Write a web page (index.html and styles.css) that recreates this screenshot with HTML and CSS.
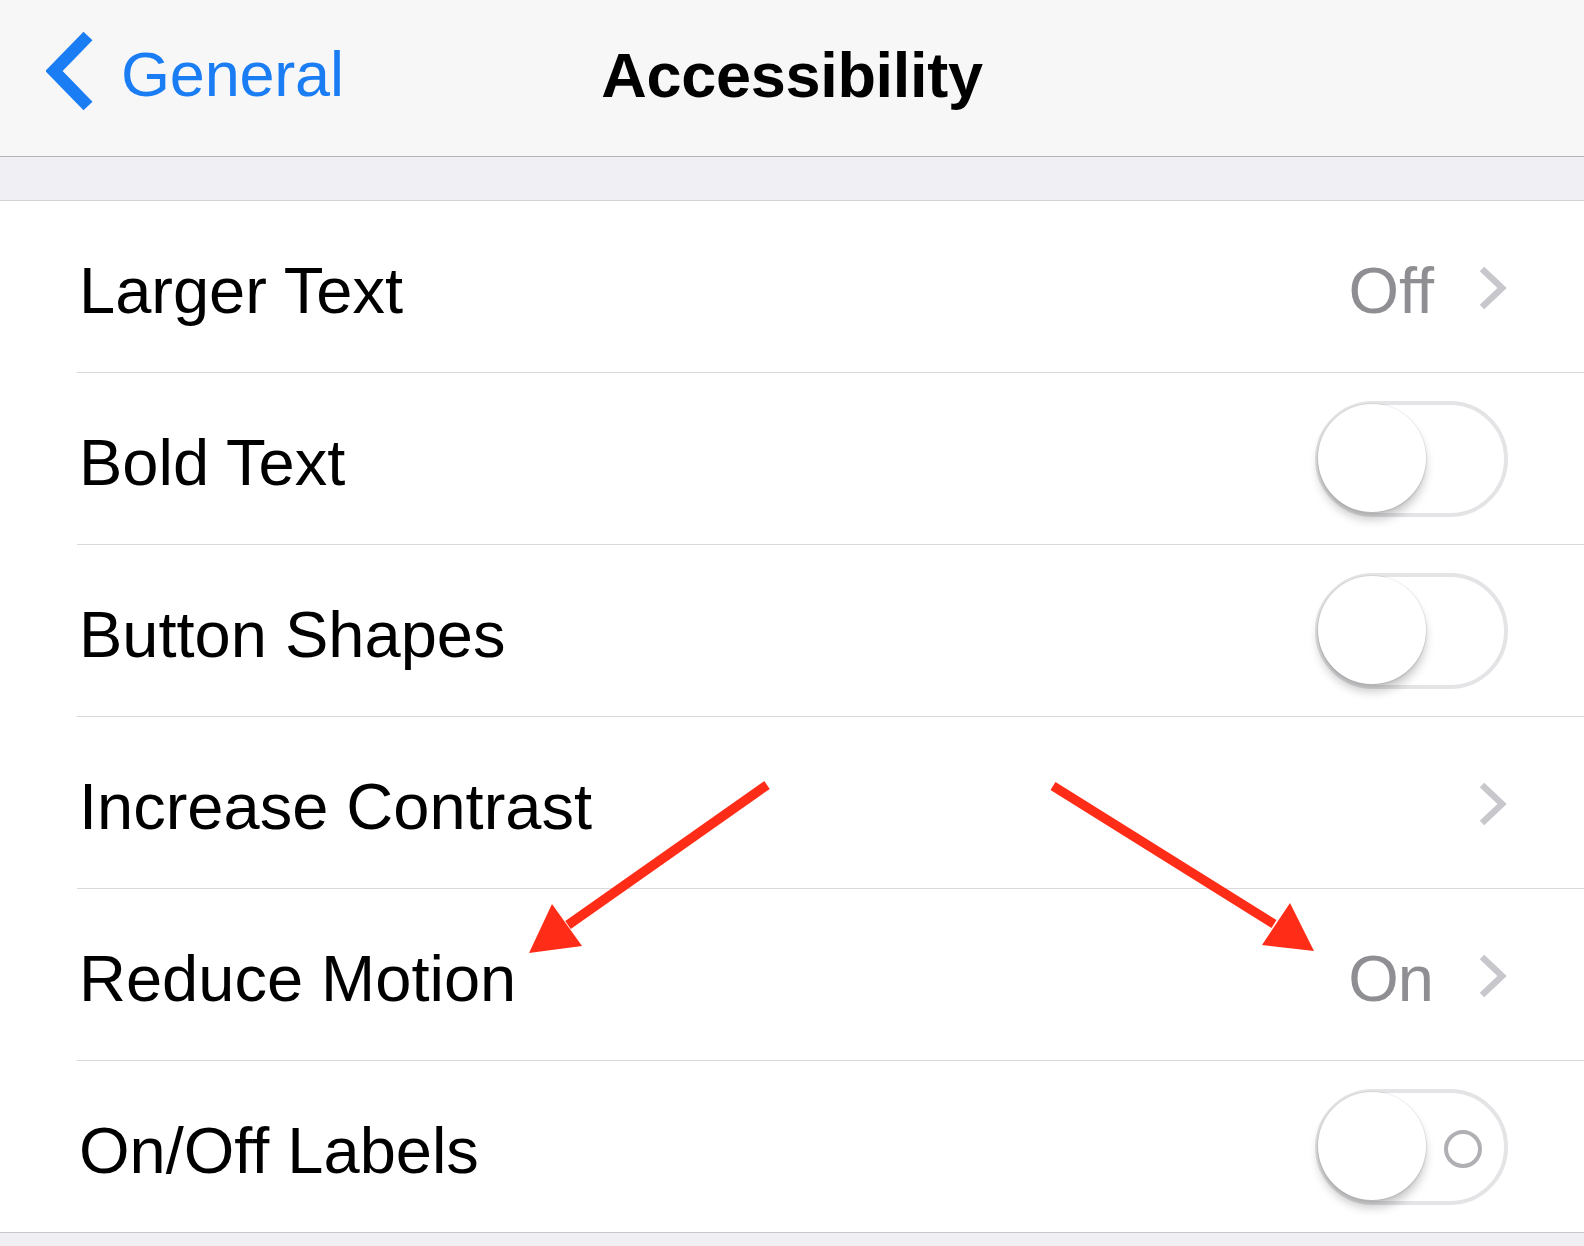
FILE: index.html
```html
<!DOCTYPE html>
<html lang="en">
<head>
<meta charset="utf-8">
<title>Accessibility</title>
<link rel="stylesheet" href="styles.css">
</head>
<body>
<div class="page">
  <header class="nav">
    <div class="nav-left">
      <svg class="back-chevron" viewBox="0 0 50 80" width="50" height="80" aria-hidden="true">
        <path d="M42 5 L8 40 L42 75" fill="none" stroke="#1a7df4" stroke-width="12.5" stroke-linejoin="miter" stroke-linecap="butt"/>
      </svg>
      <span class="back-label">General</span>
    </div>
    <h1 class="nav-title">Accessibility</h1>
    <div class="nav-right"></div>
  </header>

  <div class="gap"></div>

  <section class="group">
    <div class="row">
      <div class="row-inner">
        <span class="label">Larger Text</span>
        <span class="value">Off</span>
        <svg class="chev" viewBox="0 0 29 46" width="29" height="46" aria-hidden="true"><path d="M4 4 L24 23 L4 42" fill="none" stroke="#c7c7cc" stroke-width="6.5"/></svg>
      </div>
    </div>
    <div class="row">
      <div class="row-inner">
        <span class="label">Bold Text</span>
        <span class="switch"><span class="knob"></span></span>
      </div>
    </div>
    <div class="row">
      <div class="row-inner">
        <span class="label">Button Shapes</span>
        <span class="switch"><span class="knob"></span></span>
      </div>
    </div>
    <div class="row">
      <div class="row-inner">
        <span class="label">Increase Contrast</span>
        <svg class="chev" viewBox="0 0 29 46" width="29" height="46" aria-hidden="true"><path d="M4 4 L24 23 L4 42" fill="none" stroke="#c7c7cc" stroke-width="6.5"/></svg>
      </div>
    </div>
    <div class="row">
      <div class="row-inner">
        <span class="label">Reduce Motion</span>
        <span class="value value-on">On</span>
        <svg class="chev" viewBox="0 0 29 46" width="29" height="46" aria-hidden="true"><path d="M4 4 L24 23 L4 42" fill="none" stroke="#c7c7cc" stroke-width="6.5"/></svg>
      </div>
    </div>
    <div class="row last">
      <div class="row-inner">
        <span class="label">On/Off Labels</span>
        <span class="switch"><span class="knob"></span><span class="off-ring"></span></span>
      </div>
    </div>
  </section>

  <svg class="arrows" viewBox="0 0 1584 1246" width="1584" height="1246" aria-hidden="true">
    <line x1="767" y1="785" x2="568" y2="925" stroke="#ff2d17" stroke-width="9.5" stroke-linecap="butt"/>
    <polygon points="529,953 552,904 582,946" fill="#ff2d17"/>
    <line x1="1053" y1="786" x2="1274" y2="924" stroke="#ff2d17" stroke-width="9.5" stroke-linecap="butt"/>
    <polygon points="1314,951 1290,903 1262,945" fill="#ff2d17"/>
  </svg>
</div>
</body>
</html>
```

FILE: styles.css
```css
* { box-sizing: border-box; }

html, body {
  margin: 0;
  padding: 0;
  background: #efeff4;
}

body {
  font-family: "Liberation Sans", Arial, Helvetica, sans-serif;
  width: 1584px;
  height: 1246px;
  overflow: hidden;
}

.page {
  position: relative;
  width: 1584px;
  height: 1246px;
  background: #efeff4;
}

.nav {
  height: 157px;
  background: #f7f7f8;
  border-bottom: 1px solid #b4b4b8;
  display: grid;
  grid-template-columns: 1fr auto 1fr;
  align-items: center;
  padding-bottom: 14px;
}

.nav-left {
  display: flex;
  align-items: center;
  padding-left: 46px;
}

.back-chevron {
  display: block;
}

.back-label {
  color: #1a7df4;
  font-size: 63px;
  letter-spacing: -0.2px;
  margin-left: 25px;
  line-height: 1;
  padding-top: 6px;
}

.nav-title {
  margin: 0;
  font-size: 63px;
  font-weight: 700;
  color: #000;
  letter-spacing: -0.3px;
  line-height: 1;
  padding-top: 8px;
}

.gap {
  height: 43px;
  background: #efeff4;
}

.group {
  background: #fff;
  border-top: 1px solid #d2d2d6;
  border-bottom: 1px solid #c8c8cc;
}

.row {
  padding-left: 77px;
  background: #fff;
}

.row-inner {
  height: 172px;
  display: flex;
  align-items: center;
  border-bottom: 1px solid #d9d9dc;
  padding-left: 2px;
  padding-right: 77px;
}

.row.last .row-inner {
  height: 171px;
  border-bottom: none;
}

.label {
  flex: 1;
  font-size: 65px;
  color: #000;
  line-height: 1;
  padding-top: 8px;
}

.value {
  font-size: 65px;
  color: #8e8e93;
  line-height: 1;
  padding-top: 8px;
  margin-right: 44px;
}

.value-on {
  letter-spacing: -1px;
  margin-right: 45px;
}

.chev {
  display: block;
  margin-top: 2px;
}

.switch {
  position: relative;
  display: block;
  width: 193px;
  height: 116px;
  border: 4.5px solid #e4e4e7;
  border-radius: 58px;
  background: #fff;
  margin-right: -1px;
}

.knob {
  position: absolute;
  left: -1px;
  top: -1px;
  width: 108px;
  height: 108px;
  border-radius: 50%;
  background: #fff;
  box-shadow: 0 0 0 1px rgba(0, 0, 0, 0.06), 0 8px 10px rgba(0, 0, 0, 0.2), 0 2px 3px rgba(0, 0, 0, 0.07);
}

.off-ring {
  position: absolute;
  right: 22px;
  top: 50%;
  width: 38px;
  height: 38px;
  margin-top: -17px;
  border: 4px solid #b0b0b4;
  border-radius: 50%;
}

.arrows {
  position: absolute;
  left: 0;
  top: 0;
  pointer-events: none;
}
```
